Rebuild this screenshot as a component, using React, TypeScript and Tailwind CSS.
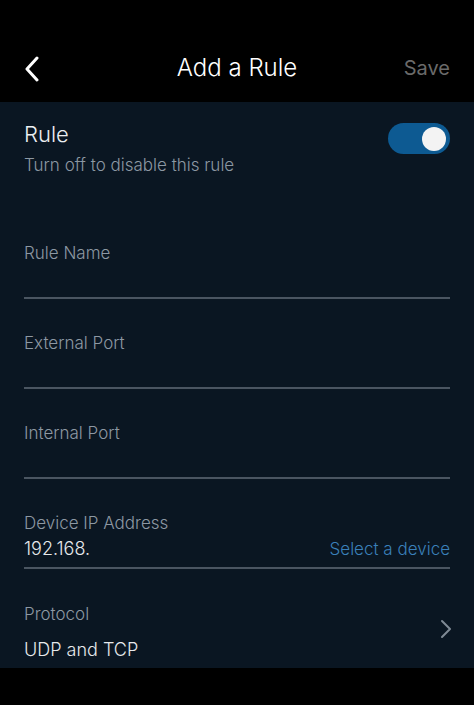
import React, { useState } from "react";

const font = { fontFamily: "Inter, 'Liberation Sans', sans-serif" };

const Field = ({ label, value, right }: { label: string; value?: string; right?: string }) => (
  <div className="border-b-2 border-[#4a5561]">
    <div className="pt-[32px] text-[17px] leading-6 text-[#8d98a3] font-light">{label}</div>
    {value !== undefined ? (
      <div className="flex items-center justify-between mt-[2px] mb-[6px] leading-6">
        <span className="text-[18px] text-[#e6e9ec] font-light">{value}</span>
        {right && <span className="text-[17px] text-[#3a80ba] font-light">{right}</span>}
      </div>
    ) : (
      <div className="h-[32px]" />
    )}
  </div>
);

export default function App() {
  const [on, setOn] = useState(true);

  return (
    <div className="w-[474px] h-[705px] bg-black flex flex-col" style={font}>
      {/* header */}
      <div className="h-[102px] flex items-end pb-[18px] px-6">
        <div className="flex-1 flex">
          <svg width="16" height="26" viewBox="0 0 16 26" className="mb-[2px]">
            <path d="M13 2 L3 13 L13 24" fill="none" stroke="#ffffff" strokeWidth="3" strokeLinecap="round" strokeLinejoin="round" />
          </svg>
        </div>
        <div className="text-center text-[24px] leading-8 text-white font-light">Add a Rule</div>
        <div className="flex-1 text-right text-[20px] leading-8 text-[#6a6a6a]">Save</div>
      </div>

      {/* panel */}
      <div className="h-[566px] bg-[#0a1622] px-6">
        <div className="flex items-start justify-between pt-[18px]">
          <div>
            <div className="text-[22px] leading-7 text-[#eceff2] font-light">Rule</div>
            <div className="text-[17px] leading-6 mt-[5px] text-[#8d98a3] font-light">Turn off to disable this rule</div>
          </div>
          <button
            onClick={() => setOn(!on)}
            className={`w-[62px] h-[31px] rounded-full flex items-center px-[4px] mt-[3px] ${on ? "bg-[#0d5a92] justify-end" : "bg-[#3a4450] justify-start"}`}
          >
            <span className="w-[24px] h-[24px] rounded-full bg-[#f3f3f3]" />
          </button>
        </div>

        <div className="pt-[32px]">
          <Field label="Rule Name" />
        </div>
        <Field label="External Port" />
        <Field label="Internal Port" />
        <Field label="Device IP Address" value="192.168." right="Select a device" />

        <div className="flex items-center justify-between">
          <div>
            <div className="pt-[33px] text-[17px] leading-6 text-[#8d98a3] font-light">Protocol</div>
            <div className="mt-[12px] text-[18px] leading-6 text-[#e6e9ec] font-light">UDP and TCP</div>
          </div>
          <svg width="12" height="20" viewBox="0 0 12 20" className="mt-[26px] mr-[-2px]">
            <path d="M2 2 L10 10 L2 18" fill="none" stroke="#7f8a95" strokeWidth="2" strokeLinecap="round" strokeLinejoin="round" />
          </svg>
        </div>
      </div>
    </div>
  );
}
